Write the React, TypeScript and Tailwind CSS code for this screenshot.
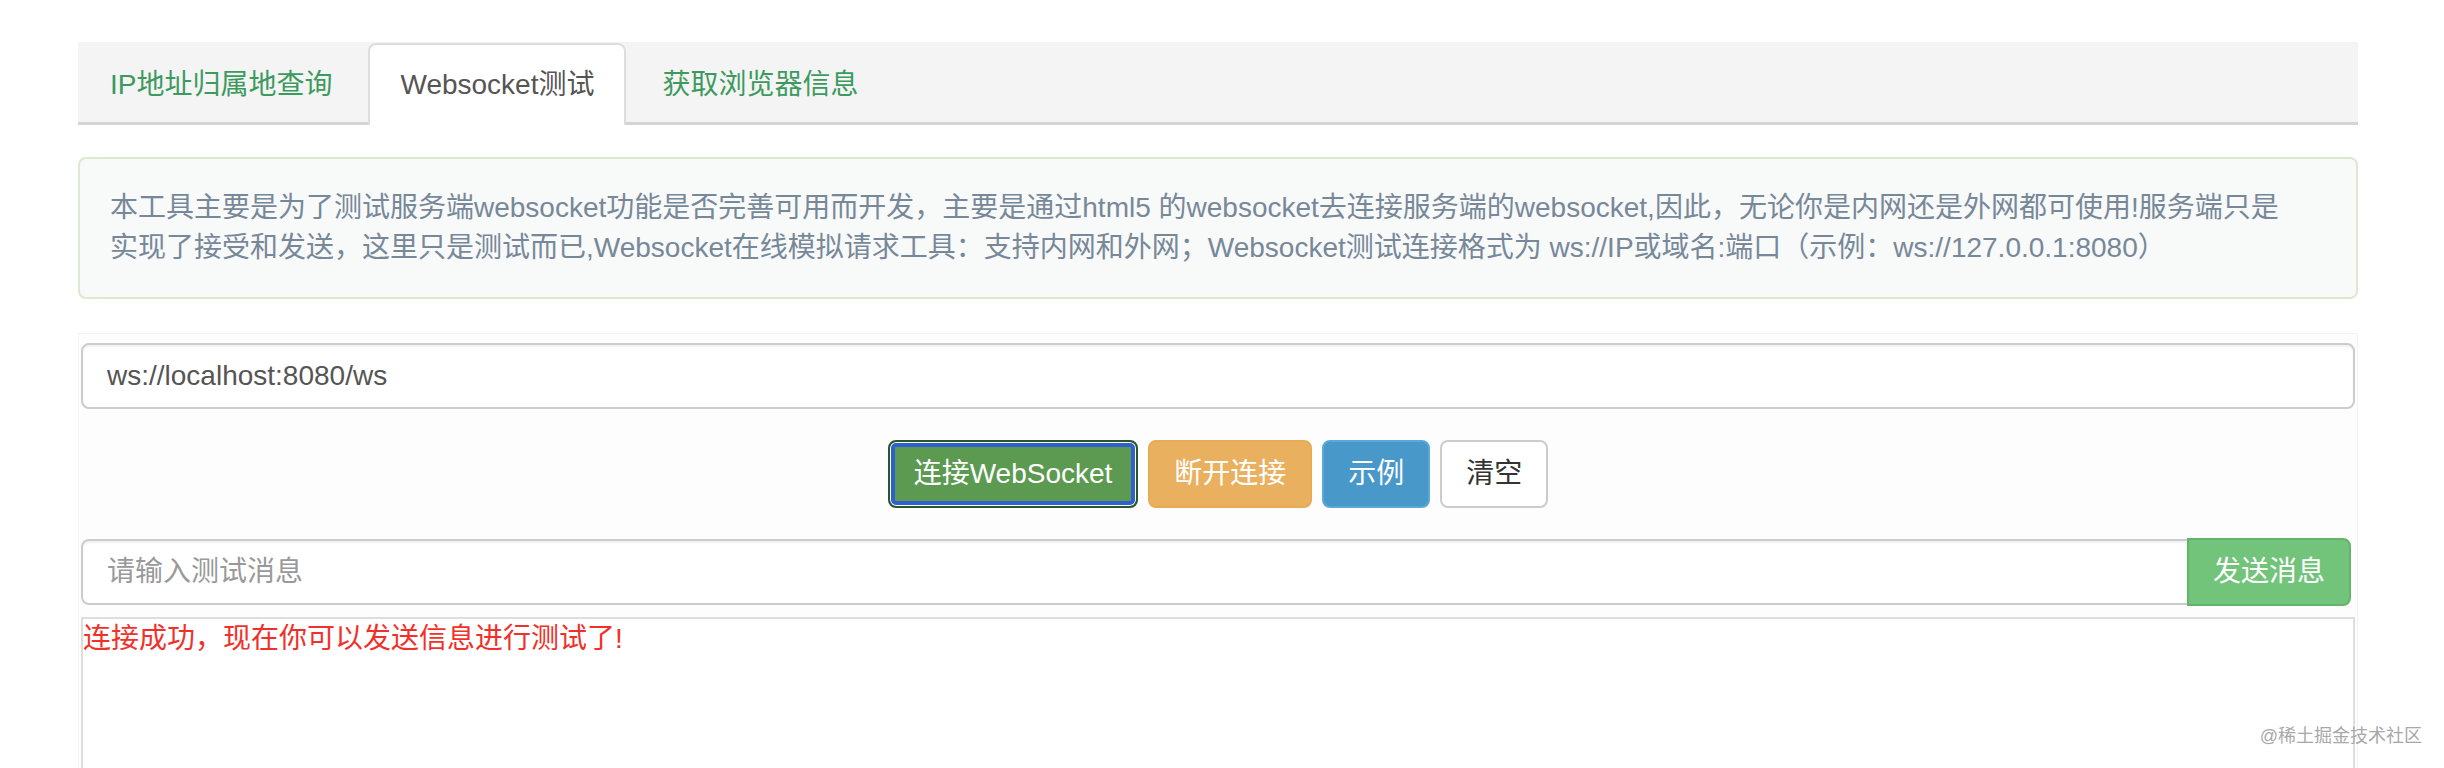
import { useState } from "react";

const font = "font-['Liberation_Sans','Noto_Sans_CJK_SC',sans-serif]";

const tabs = ["IP地址归属地查询", "Websocket测试", "获取浏览器信息"];

const App = () => {
  const [url, setUrl] = useState("ws://localhost:8080/ws");
  const [msg, setMsg] = useState("");
  const active = 1;

  return (
    <div className={`relative min-h-[768px] bg-white pt-[42px] pl-[78px] pr-[86px] text-[28px] ${font}`}>
      {/* tabs */}
      <ul className="flex bg-[#f4f4f4] pt-px border-b-[3px] border-[#d4d4d4]">
        {tabs.map((t, i) => (
          <li
            key={t}
            className={
              i === active
                ? "-mb-[3px] mr-[4px] px-[30px] py-[20px] leading-[40px] bg-white text-[#555] border-2 border-b-0 border-[#dddddd] rounded-t-[8px]"
                : "-mb-[3px] mr-[4px] px-[30px] py-[20px] leading-[40px] text-[#3d9a5e] border-2 border-b-0 border-transparent"
            }
          >
            {t}
          </li>
        ))}
      </ul>

      {/* info */}
      <div className="mt-[32px] border-2 border-[#dbe9cf] bg-[#f8f9f9] rounded-[8px] px-[30px] py-[29px] leading-[40px] text-[#778899]">
        本工具主要是为了测试服务端websocket功能是否完善可用而开发，主要是通过html5 的websocket去连接服务端的websocket,因此，无论你是内网还是外网都可使用!服务端只是
        <br />
        实现了接受和发送，这里只是测试而已,Websocket在线模拟请求工具：支持内网和外网；Websocket测试连接格式为 ws://IP或域名:端口（示例：ws://127.0.0.1:8080）
      </div>

      {/* panel */}
      <div className="mt-[34px] pt-[9px] px-[2px] border border-b-0 border-[#f4f4f4] bg-[#fdfdfd]">
        <input
          className="block w-full h-[66px] px-[24px] border-2 border-[#cccccc] rounded-[8px] bg-white text-[#555] outline-none shadow-[inset_0_2px_2px_rgba(0,0,0,0.06)]"
          value={url}
          onChange={(e) => setUrl(e.target.value)}
        />

        <div className="flex justify-center gap-[10px] my-[31px] leading-[40px]">
          <button className="px-[24px] py-[12px] rounded-[8px] border-2 border-[#2b552b] bg-[#5b9a50] text-white shadow-[inset_0_0_0_1px_#ffffff,inset_0_0_0_5px_#2f60cf]">
            连接WebSocket
          </button>
          <button className="px-[24px] py-[12px] rounded-[8px] border-2 border-[#e8ab55] bg-[#e9b060] text-white">
            断开连接
          </button>
          <button className="px-[24px] py-[12px] rounded-[8px] border-2 border-[#5aaad8] bg-[#4898ca] text-white">
            示例
          </button>
          <button className="px-[24px] py-[12px] rounded-[8px] border-2 border-[#cccccc] bg-white text-[#333]">
            清空
          </button>
        </div>

        <div className="flex mr-[4px]">
          <input
            className="flex-1 h-[66px] px-[24px] border-2 border-[#cccccc] rounded-l-[8px] bg-white text-[#555] outline-none placeholder:text-[#999] shadow-[inset_0_2px_2px_rgba(0,0,0,0.06)]"
            placeholder="请输入测试消息"
            value={msg}
            onChange={(e) => setMsg(e.target.value)}
          />
          <button className="-ml-[2px] h-[68px] -mt-px px-[24px] rounded-r-[8px] border-2 border-[#62b36b] bg-[#73c47b] text-white">
            发送消息
          </button>
        </div>

        <div className="mt-[11px] h-[300px] border-2 border-[#dddddd] bg-white leading-[40px] text-[#f2302a]">
          连接成功，现在你可以发送信息进行测试了!
        </div>
      </div>

      {/* watermark */}
      <div className="absolute right-[22px] top-[724px] text-[18px] leading-[24px] text-[#a8a8a8] [text-shadow:0_0_2px_#fff]">
        @稀土掘金技术社区
      </div>
    </div>
  );
};

export default App;
